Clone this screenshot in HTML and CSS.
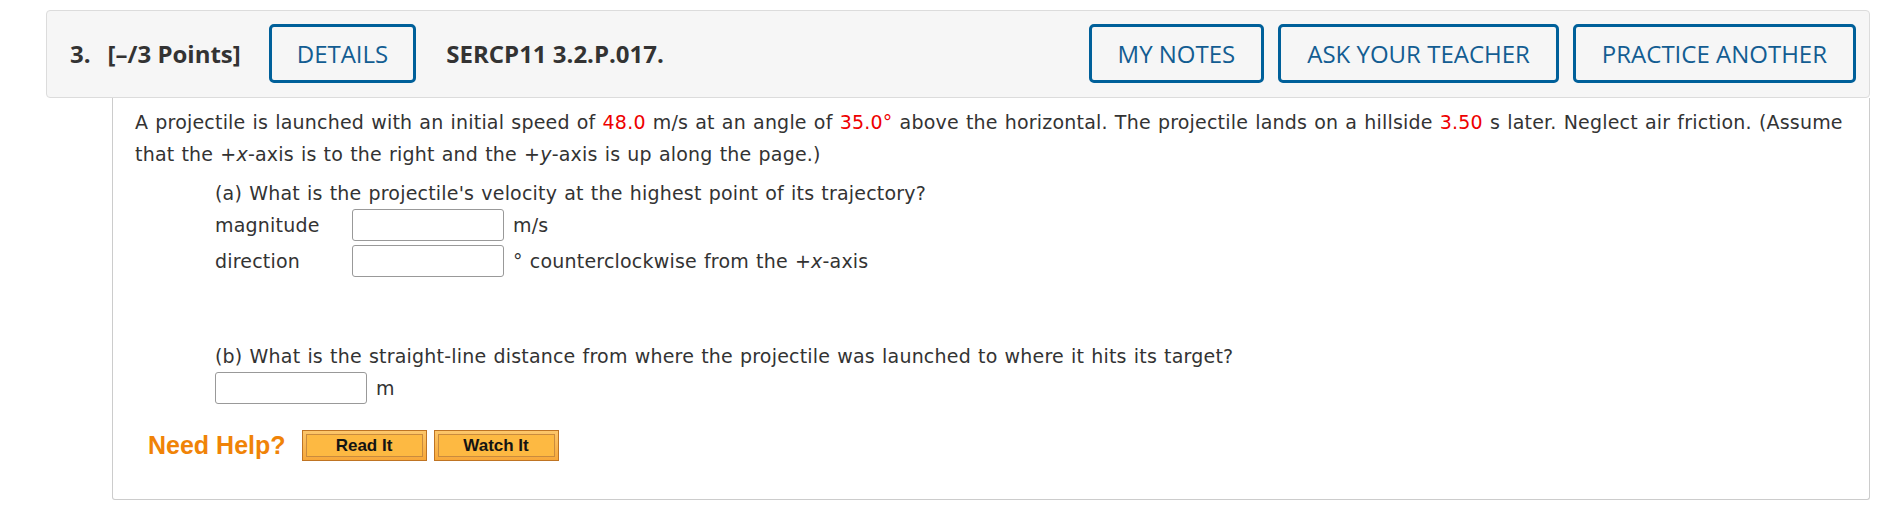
FILE: index.html
```html
<!DOCTYPE html>
<html lang="en">
<head>
<meta charset="utf-8">
<title>Question 3</title>
<link rel="stylesheet" href="styles.css">
</head>
<body>
<div class="question">
  <div class="q-header">
    <div class="q-title"><span class="q-num">3.</span><span class="q-points">[–/3 Points]</span></div>
    <button class="btn btn-details">DETAILS</button>
    <div class="q-code">SERCP11 3.2.P.017.</div>
    <div class="spacer"></div>
    <div class="actions">
      <button class="btn">MY NOTES</button>
      <button class="btn">ASK YOUR TEACHER</button>
      <button class="btn">PRACTICE ANOTHER</button>
    </div>
  </div>
  <div class="q-body">
    <p class="intro">A projectile is launched with an initial speed of <span class="val">48.0</span> m/s at an angle of <span class="val">35.0°</span> above the horizontal. The projectile lands on a hillside <span class="val">3.50</span> s later. Neglect air friction. (Assume that the +<i>x</i>-axis is to the right and the +<i>y</i>-axis is up along the page.)</p>
    <div class="part part-a">
      <p class="part-q">(a) What is the projectile's velocity at the highest point of its trajectory?</p>
      <div class="answer-row">
        <span class="label">magnitude</span>
        <input class="answer" type="text">
        <span class="unit">m/s</span>
      </div>
      <div class="answer-row">
        <span class="label">direction</span>
        <input class="answer" type="text">
        <span class="unit">° counterclockwise from the +<i>x</i>-axis</span>
      </div>
    </div>
    <div class="part part-b">
      <p class="part-q">(b) What is the straight-line distance from where the projectile was launched to where it hits its target?</p>
      <div class="answer-row">
        <input class="answer" type="text">
        <span class="unit">m</span>
      </div>
    </div>
    <div class="help">
      <span class="help-label">Need Help?</span>
      <button class="help-btn"><span class="help-inner">Read It</span></button>
      <button class="help-btn"><span class="help-inner">Watch It</span></button>
    </div>
  </div>
</div>
</body>
</html>
```
FILE: styles.css
```css
body {
  margin: 0;
  background: #ffffff;
  font-family: "DejaVu Sans", Verdana, sans-serif;
}

.question {
  margin: 10px 25px 0 46px;
}

.q-header {
  display: flex;
  align-items: center;
  background: #f6f6f6;
  border: 1px solid #dcdcdc;
  border-radius: 4px;
  padding: 13px 13px 14px 23px;
  font-family: "Open Sans", sans-serif;
  color: #333333;
}

.q-title {
  font-weight: 700;
  font-size: 24px;
  margin-right: 28px;
}

.q-num {
  margin-right: 17px;
}

.btn {
  font-family: "Open Sans", sans-serif;
  font-size: 24px;
  line-height: 33px;
  padding: 10px 26px;
  border: 3px solid #00609a;
  border-radius: 5px;
  background: transparent;
  color: #135d92;
  cursor: pointer;
}

.btn-details {
  padding: 10px 25px;
}

.q-code {
  margin-left: 30px;
  font-weight: 700;
  font-size: 24px;
}

.spacer {
  flex: 1;
}

.actions {
  display: flex;
  gap: 14px;
}

.q-body {
  margin-left: 66px;
  border: 1px solid #cccccc;
  border-top: none;
  border-radius: 0 0 3px 3px;
  padding: 8px 16px 38px 22px;
  font-size: 19px;
  line-height: 32px;
  letter-spacing: 0.2px;
  word-spacing: 0.85px;
  color: #333333;
}

.intro {
  margin: 0;
}

.val {
  color: #ee0000;
}

.part {
  margin-left: 80px;
}

.part-a {
  margin-top: 7px;
}

.part-b {
  margin-top: 63px;
}

.part-q {
  margin: 0;
}

.answer-row {
  display: flex;
  align-items: center;
  height: 32px;
  margin-bottom: 4px;
}

.part-b .answer-row {
  margin-bottom: 0;
}

.label {
  width: 137px;
}

.answer {
  box-sizing: border-box;
  width: 152px;
  height: 32px;
  border: 1px solid #999999;
  border-radius: 3px;
  margin: 0 9px 0 0;
  padding: 0 4px;
  background: #ffffff;
}

.help {
  display: flex;
  align-items: center;
  margin: 26px 0 0 13px;
  letter-spacing: 0;
  word-spacing: 0;
}

.help-label {
  font-family: "Liberation Sans", Arial, sans-serif;
  font-weight: 700;
  font-size: 25px;
  line-height: 31px;
  color: #f08307;
  margin-right: 16px;
}

.help-btn {
  box-sizing: border-box;
  width: 125px;
  height: 31px;
  margin-right: 7px;
  padding: 3px;
  border: 1px solid #bf7423;
  background: linear-gradient(#fcc66a, #f7a83a);
  display: flex;
  cursor: pointer;
}

.help-inner {
  flex: 1;
  display: flex;
  align-items: center;
  justify-content: center;
  border: 1px solid #c98b3e;
  background: #fdb942;
  font-family: "Liberation Sans", Arial, sans-serif;
  font-weight: 700;
  font-size: 17px;
  color: #141414;
}
```
